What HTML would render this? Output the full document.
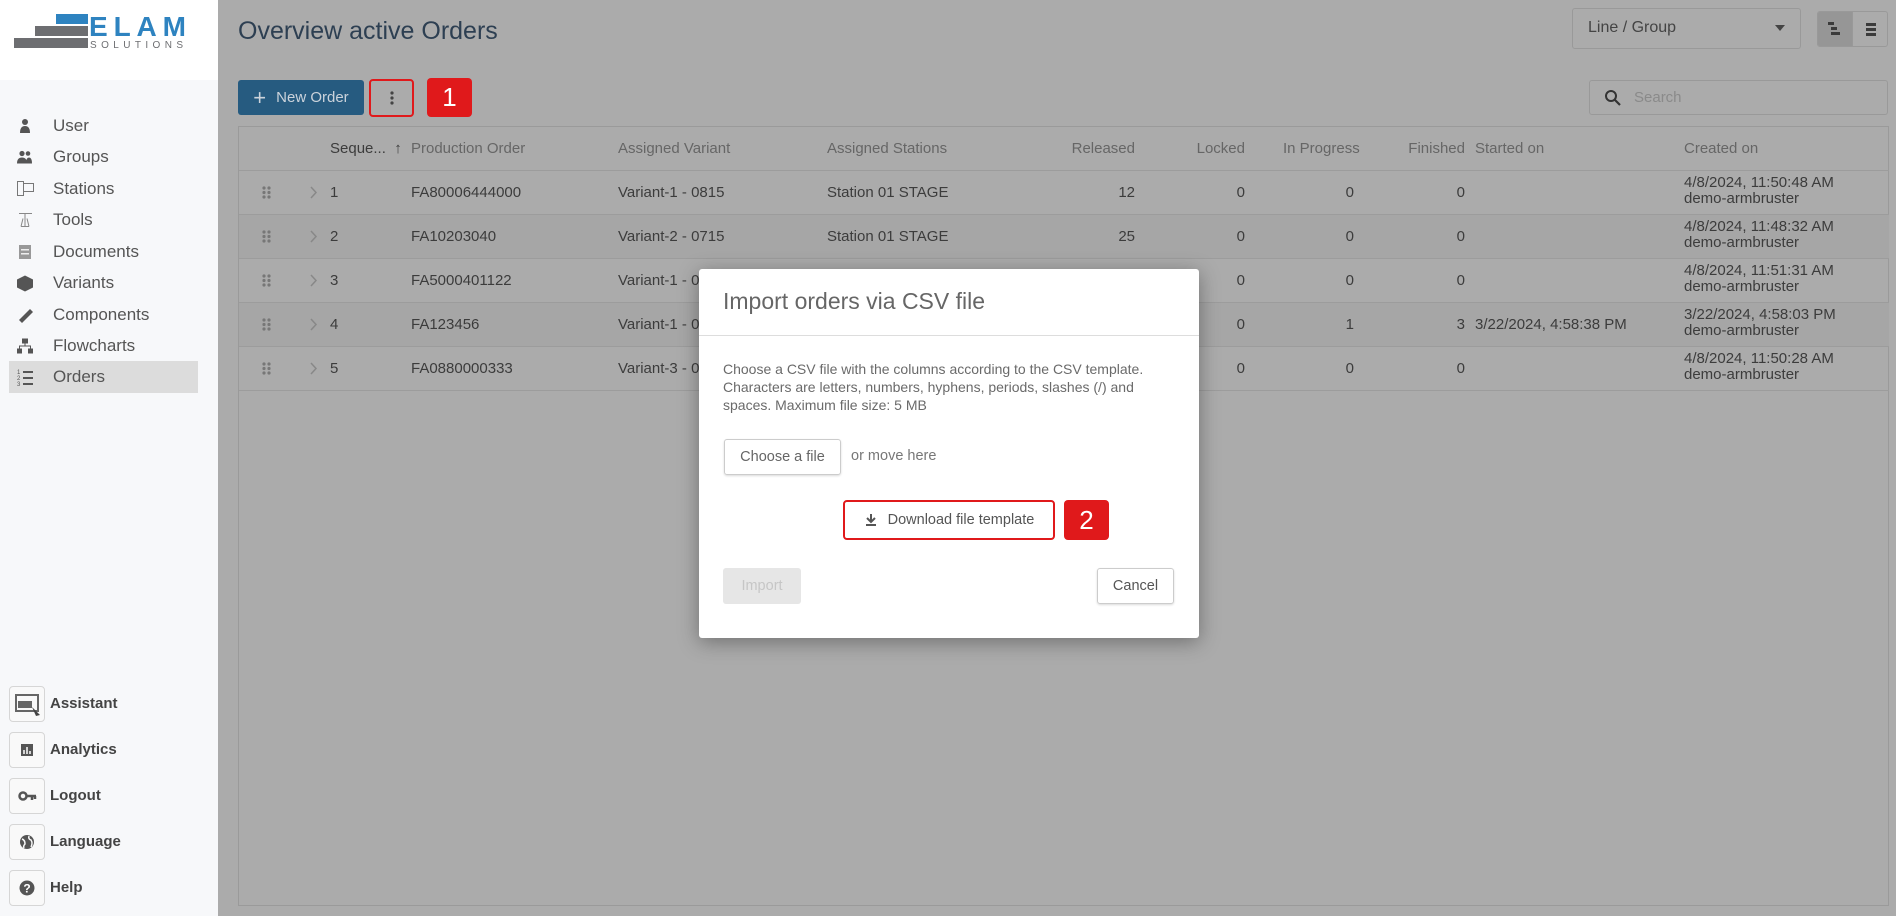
<!DOCTYPE html>
<html><head><meta charset="utf-8"><style>
*{box-sizing:border-box;margin:0;padding:0}
body{width:1896px;height:916px;overflow:hidden;font-family:"Liberation Sans",sans-serif;background:#ababab;position:relative}
.abs{position:absolute}
#side{left:0;top:0;width:218px;height:916px;background:#f7f8fa}
#logo{left:0;top:0;width:218px;height:80px;background:#fff}
.nav{position:absolute;left:53px;font-size:17px;color:#555;line-height:20px}
.bb{position:absolute;left:9px;width:36px;height:36px;border:1px solid #d6d6d6;border-radius:4px;background:#f9f9f9}
.bt{position:absolute;left:50px;font-size:15px;font-weight:bold;color:#444}
.th{position:absolute;top:140px;font-size:15px;color:#666}
.row{position:absolute;left:239px;width:1650px;height:44px;border-bottom:1px solid #9c9c9c}
.c{position:absolute;font-size:15px;color:#3c3c3c;white-space:nowrap}
.r{text-align:right}
.btn{position:absolute;border-radius:3px;font-size:14px;display:flex;align-items:center;justify-content:center}
</style></head><body>
<div id="side" class="abs"></div>
<div id="logo" class="abs">
 <svg width="218" height="80" style="position:absolute;left:0;top:0">
  <rect x="56" y="14" width="32" height="10" fill="#2e83c0"/>
  <rect x="35" y="26" width="53" height="10" fill="#6d6e71"/>
  <rect x="14" y="38" width="74" height="10" fill="#6d6e71"/>
  <text x="89" y="36" font-family="Liberation Sans" font-weight="bold" font-size="28" fill="#2e83c0" textLength="97">ELAM</text>
  <text x="90" y="48" font-family="Liberation Sans" font-size="10" fill="#6d6e71" textLength="96" letter-spacing="3">SOLUTIONS</text>
 </svg>
</div>
<!-- nav -->
<div class="abs" style="left:9px;top:361px;width:189px;height:32px;background:#dcdcdc"></div>
<svg class="abs" style="left:16px;top:114px" width="20" height="290" fill="#555">
 <g><circle cx="9" cy="8" r="3"/><path d="M4 19 Q4 12 9 12 Q14 12 14 19Z"/></g>
 <g transform="translate(0,31.5)"><circle cx="6" cy="8" r="2.6"/><circle cx="12" cy="8" r="2.3"/><path d="M1 18 Q1 12 6 12 Q11 12 11 18Z M10 18 Q10 12 13 12 Q16 12 16 18Z"/></g>
 <g transform="translate(0,63)"><rect x="1.5" y="4.5" width="6" height="14" fill="none" stroke="#777"/><rect x="7.5" y="6.5" width="10" height="8" fill="none" stroke="#777"/></g>
 <g transform="translate(0,94.5)"><path d="M3 5 H16 M9 5 V18 M5 18 H13 M5 18 L7 10 M13 18 L11 10" stroke="#888" fill="none"/></g>
 <g transform="translate(0,126)"><rect x="3" y="5" width="12" height="14" fill="#999"/><rect x="5" y="9" width="8" height="1.5" fill="#eee"/><rect x="5" y="13" width="8" height="1.5" fill="#eee"/></g>
 <g transform="translate(0,157.5)"><path d="M9 4 L17 8 L17 16 L9 20 L1 16 L1 8Z"/></g>
 <g transform="translate(0,189)"><path d="M3 17 L14 6 L17 9 L6 20Z"/></g>
 <g transform="translate(0,220.5)"><rect x="6" y="4" width="6" height="5"/><rect x="1" y="14" width="5" height="5"/><rect x="12" y="14" width="5" height="5"/><path d="M9 9 V11 M3.5 14 V11.5 H14.5 V14" stroke="#555" fill="none"/></g>
 <g transform="translate(0,252)"><path d="M7 6 H17 M7 12 H17 M7 18 H17" stroke="#555" stroke-width="2"/><text x="1" y="8" font-size="6">1</text><text x="1" y="14" font-size="6">2</text><text x="1" y="20" font-size="6">3</text></g>
</svg>
<div class="nav" style="top:116px">User</div>
<div class="nav" style="top:147px">Groups</div>
<div class="nav" style="top:179px">Stations</div>
<div class="nav" style="top:210px">Tools</div>
<div class="nav" style="top:242px">Documents</div>
<div class="nav" style="top:273px">Variants</div>
<div class="nav" style="top:305px">Components</div>
<div class="nav" style="top:336px">Flowcharts</div>
<div class="nav" style="top:367px">Orders</div>
<!-- bottom -->
<div class="bb" style="top:686px"><svg width="34" height="34"><rect x="6" y="8" width="22" height="16" fill="none" stroke="#666" stroke-width="2"/><rect x="8" y="14" width="14" height="7" fill="#666"/><path d="M22 20 L30 28 L26 29Z" fill="#444"/></svg></div>
<div class="bb" style="top:732px"><svg width="34" height="34"><rect x="11" y="11" width="12" height="12" fill="#555"/><path d="M14 21V17M17 21V14M20 21V18" stroke="#fff" stroke-width="1.5"/></svg></div>
<div class="bb" style="top:778px"><svg width="34" height="34"><circle cx="13" cy="17" r="3.5" fill="none" stroke="#555" stroke-width="2.5"/><path d="M16 17H26M22 17V21M25 17V20" stroke="#555" stroke-width="2.5"/></svg></div>
<div class="bb" style="top:824px"><svg width="34" height="34"><circle cx="17" cy="17" r="7" fill="#555"/><path d="M12 14 Q15 15 15 19 Q13 21 14 23 M19 11 Q18 14 21 15 Q23 18 21 22" stroke="#f9f9f9" stroke-width="1.5" fill="none"/></svg></div>
<div class="bb" style="top:870px"><svg width="34" height="34"><circle cx="17" cy="17" r="7.5" fill="#555"/><text x="17" y="21.5" text-anchor="middle" font-size="12" font-weight="bold" fill="#fff" font-family="Liberation Sans">?</text></svg></div>
<div class="bt" style="top:695px">Assistant</div>
<div class="bt" style="top:741px">Analytics</div>
<div class="bt" style="top:787px">Logout</div>
<div class="bt" style="top:833px">Language</div>
<div class="bt" style="top:879px">Help</div>

<!-- main -->
<div class="abs" style="left:238px;top:17px;font-size:25px;color:#2d3f52">Overview active Orders</div>
<div class="btn" style="left:238px;top:80px;width:126px;height:35px;background:#265b80;color:#cbd3db;font-size:15px"><span style="font-size:22px;margin-right:10px;font-weight:300">+</span>New Order</div>
<div class="btn" style="left:369px;top:79px;width:45px;height:38px;border:2px solid #e0191b;border-radius:4px"><svg width="6" height="14"><circle cx="3" cy="2" r="1.6" fill="#444"/><circle cx="3" cy="7" r="1.6" fill="#444"/><circle cx="3" cy="12" r="1.6" fill="#444"/></svg></div>
<div class="btn" style="left:427px;top:78px;width:45px;height:39px;background:#e0191b;color:#fff;font-size:26px;border-radius:4px">1</div>

<div class="abs" style="left:1572px;top:8px;width:229px;height:41px;border:1px solid #999;border-radius:3px"></div>
<div class="abs" style="left:1588px;top:19px;font-size:16px;color:#444">Line / Group</div>
<svg class="abs" style="left:1775px;top:25px" width="10" height="6"><path d="M0 0H10L5 6Z" fill="#444"/></svg>
<div class="abs" style="left:1817px;top:11px;width:71px;height:36px;border:1px solid #999;border-radius:3px;overflow:hidden"><div style="width:35px;height:36px;background:#969696;border-right:1px solid #999"></div></div>
<svg class="abs" style="left:1828px;top:22px" width="60" height="14" fill="#3b3b3b"><rect x="0" y="0" width="6" height="3"/><rect x="3" y="5" width="6" height="3"/><rect x="3" y="10" width="9" height="3"/><rect x="38" y="1" width="10" height="3"/><rect x="38" y="6" width="10" height="3"/><rect x="38" y="11" width="10" height="3"/></svg>
<div class="abs" style="left:1589px;top:80px;width:299px;height:35px;border:1px solid #999;border-radius:3px"></div>
<svg class="abs" style="left:1604px;top:89px" width="18" height="18"><circle cx="7" cy="7" r="5" fill="none" stroke="#333" stroke-width="2"/><path d="M10.5 10.5L16 16" stroke="#333" stroke-width="2.2"/></svg>
<div class="abs" style="left:1634px;top:89px;font-size:15px;color:#8a8a8a">Search</div>

<!-- table -->
<div class="abs" style="left:238px;top:126px;width:1651px;height:780px;border:1px solid #9a9a9a"></div>
<div class="abs" style="left:239px;top:170px;width:1650px;height:1px;background:#9c9c9c"></div>
<div class="th" style="left:330px;color:#3c3c3c">Seque... &nbsp;↑</div>
<div class="th" style="left:411px">Production Order</div>
<div class="th" style="left:618px">Assigned Variant</div>
<div class="th" style="left:827px">Assigned Stations</div>
<div class="th r" style="left:1035px;width:100px">Released</div>
<div class="th r" style="left:1145px;width:100px">Locked</div>
<div class="th" style="left:1283px">In Progress</div>
<div class="th r" style="left:1365px;width:100px">Finished</div>
<div class="th" style="left:1475px">Started on</div>
<div class="th" style="left:1684px">Created on</div>

<div class="row" style="top:171px"></div>
<div class="row" style="top:215px;background:#a6a6a6"></div>
<div class="row" style="top:259px"></div>
<div class="row" style="top:303px;background:#a6a6a6"></div>
<div class="row" style="top:347px"></div>

<svg class="abs" style="left:262px;top:186px" width="70" height="190" fill="#777" stroke="#888">
 <g id="d"><circle cx="2" cy="2" r="1.6" stroke="none"/><circle cx="7" cy="2" r="1.6" stroke="none"/><circle cx="2" cy="6.5" r="1.6" stroke="none"/><circle cx="7" cy="6.5" r="1.6" stroke="none"/><circle cx="2" cy="11" r="1.6" stroke="none"/><circle cx="7" cy="11" r="1.6" stroke="none"/><path d="M49 1L54 6.5L49 12" fill="none" stroke-width="1.5"/></g>
 <use href="#d" y="44"/><use href="#d" y="88"/><use href="#d" y="132"/><use href="#d" y="176"/>
</svg>

<div class="c" style="left:330px;top:184px">1</div><div class="c" style="left:411px;top:184px">FA80006444000</div><div class="c" style="left:618px;top:184px">Variant-1 - 0815</div><div class="c" style="left:827px;top:184px">Station 01 STAGE</div><div class="c r" style="left:1035px;width:100px;top:184px">12</div><div class="c r" style="left:1145px;width:100px;top:184px">0</div><div class="c r" style="left:1254px;width:100px;top:184px">0</div><div class="c r" style="left:1365px;width:100px;top:184px">0</div><div class="c" style="left:1684px;top:175px;line-height:16px">4/8/2024, 11:50:48 AM<br>demo-armbruster</div>

<div class="c" style="left:330px;top:228px">2</div><div class="c" style="left:411px;top:228px">FA10203040</div><div class="c" style="left:618px;top:228px">Variant-2 - 0715</div><div class="c" style="left:827px;top:228px">Station 01 STAGE</div><div class="c r" style="left:1035px;width:100px;top:228px">25</div><div class="c r" style="left:1145px;width:100px;top:228px">0</div><div class="c r" style="left:1254px;width:100px;top:228px">0</div><div class="c r" style="left:1365px;width:100px;top:228px">0</div><div class="c" style="left:1684px;top:219px;line-height:16px">4/8/2024, 11:48:32 AM<br>demo-armbruster</div>

<div class="c" style="left:330px;top:272px">3</div><div class="c" style="left:411px;top:272px">FA5000401122</div><div class="c" style="left:618px;top:272px">Variant-1 - 0815</div><div class="c r" style="left:1145px;width:100px;top:272px">0</div><div class="c r" style="left:1254px;width:100px;top:272px">0</div><div class="c r" style="left:1365px;width:100px;top:272px">0</div><div class="c" style="left:1684px;top:263px;line-height:16px">4/8/2024, 11:51:31 AM<br>demo-armbruster</div>

<div class="c" style="left:330px;top:316px">4</div><div class="c" style="left:411px;top:316px">FA123456</div><div class="c" style="left:618px;top:316px">Variant-1 - 0815</div><div class="c r" style="left:1145px;width:100px;top:316px">0</div><div class="c r" style="left:1254px;width:100px;top:316px">1</div><div class="c r" style="left:1365px;width:100px;top:316px">3</div><div class="c" style="left:1475px;top:316px">3/22/2024, 4:58:38 PM</div><div class="c" style="left:1684px;top:307px;line-height:16px">3/22/2024, 4:58:03 PM<br>demo-armbruster</div>

<div class="c" style="left:330px;top:360px">5</div><div class="c" style="left:411px;top:360px">FA0880000333</div><div class="c" style="left:618px;top:360px">Variant-3 - 0616</div><div class="c r" style="left:1145px;width:100px;top:360px">0</div><div class="c r" style="left:1254px;width:100px;top:360px">0</div><div class="c r" style="left:1365px;width:100px;top:360px">0</div><div class="c" style="left:1684px;top:351px;line-height:16px">4/8/2024, 11:50:28 AM<br>demo-armbruster</div>

<!-- modal -->
<div class="abs" style="left:699px;top:269px;width:500px;height:369px;background:#fff;border-radius:3px;box-shadow:0 4px 20px rgba(0,0,0,.35)"></div>
<div class="abs" style="left:699px;top:335px;width:500px;height:1px;background:#ddd"></div>
<div class="abs" style="left:723px;top:288px;font-size:23px;color:#666">Import orders via CSV file</div>
<div class="abs" style="left:723px;top:360px;width:460px;font-size:14px;line-height:18px;color:#6a6a6a">Choose a CSV file with the columns according to the CSV template. Characters are letters, numbers, hyphens, periods, slashes (/) and spaces. Maximum file size: 5 MB</div>
<div class="btn" style="left:724px;top:439px;width:117px;height:36px;border:1px solid #ccc;box-shadow:0 1px 2px rgba(0,0,0,.15);color:#666;font-size:14.5px">Choose a file</div>
<div class="abs" style="left:851px;top:448px;font-size:14.5px;color:#777">or move here</div>
<div class="btn" style="left:843px;top:500px;width:212px;height:40px;border:2px solid #e0191b;border-radius:4px;color:#555;font-size:14.5px"><svg width="14" height="14" style="margin-right:10px"><path d="M7 1V9M3 5L7 9L11 5" stroke="#555" stroke-width="2" fill="none"/><path d="M2 12H12" stroke="#555" stroke-width="2"/></svg>Download file template</div>
<div class="btn" style="left:1064px;top:500px;width:45px;height:40px;background:#e0191b;color:#fff;font-size:26px;border-radius:4px">2</div>
<div class="btn" style="left:723px;top:568px;width:78px;height:36px;background:#e6e6e6;color:#c6c6c6;font-size:14.5px">Import</div>
<div class="btn" style="left:1097px;top:568px;width:77px;height:36px;border:1px solid #ccc;box-shadow:0 1px 2px rgba(0,0,0,.15);color:#555;font-size:14.5px">Cancel</div>
</body></html>
